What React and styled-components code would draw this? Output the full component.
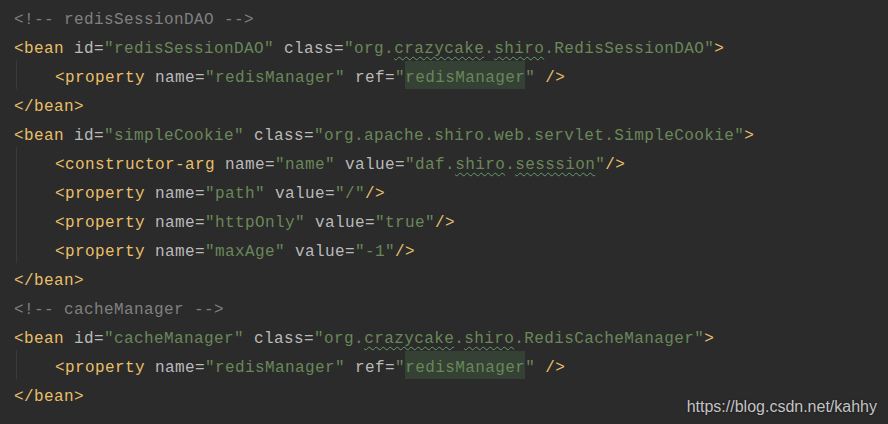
import styled, { createGlobalStyle } from "styled-components";

const GlobalStyle = createGlobalStyle`
  html, body {
    margin: 0;
    padding: 0;
    background: #2b2b2b;
  }
`;

const colors = {
  tag: "#e8bf6a",
  attr: "#bababa",
  val: "#6a8759",
  cmt: "#808080",
  plain: "#a9b7c6",
};

// [kind, text] ; kinds: tag, attr, val, cmt, plain, typo, hl
const lines = [
  { tokens: [["cmt", "<!-- redisSessionDAO -->"]] },
  {
    tokens: [
      ["tag", "<bean"], ["plain", " "], ["attr", "id="], ["val", '"redisSessionDAO"'],
      ["plain", " "], ["attr", "class="], ["val", '"org.'], ["typo", "crazycake"],
      ["val", "."], ["typo", "shiro"], ["val", '.RedisSessionDAO"'], ["tag", ">"],
    ],
  },
  {
    indent: true,
    tokens: [
      ["tag", "<property"], ["plain", " "], ["attr", "name="], ["val", '"redisManager"'],
      ["plain", " "], ["attr", "ref="], ["val", '"'], ["hl", "redisManager"], ["val", '"'],
      ["plain", " "], ["tag", "/>"],
    ],
  },
  { tokens: [["tag", "</bean>"]] },
  {
    tokens: [
      ["tag", "<bean"], ["plain", " "], ["attr", "id="], ["val", '"simpleCookie"'],
      ["plain", " "], ["attr", "class="], ["val", '"org.apache.shiro.web.servlet.SimpleCookie"'],
      ["tag", ">"],
    ],
  },
  {
    indent: true,
    tokens: [
      ["tag", "<constructor-arg"], ["plain", " "], ["attr", "name="], ["val", '"name"'],
      ["plain", " "], ["attr", "value="], ["val", '"daf.'], ["typo", "shiro"], ["val", "."],
      ["typo", "sesssion"], ["val", '"'], ["tag", "/>"],
    ],
  },
  {
    indent: true,
    tokens: [
      ["tag", "<property"], ["plain", " "], ["attr", "name="], ["val", '"path"'],
      ["plain", " "], ["attr", "value="], ["val", '"/"'], ["tag", "/>"],
    ],
  },
  {
    indent: true,
    tokens: [
      ["tag", "<property"], ["plain", " "], ["attr", "name="], ["val", '"httpOnly"'],
      ["plain", " "], ["attr", "value="], ["val", '"true"'], ["tag", "/>"],
    ],
  },
  {
    indent: true,
    tokens: [
      ["tag", "<property"], ["plain", " "], ["attr", "name="], ["val", '"maxAge"'],
      ["plain", " "], ["attr", "value="], ["val", '"-1"'], ["tag", "/>"],
    ],
  },
  { tokens: [["tag", "</bean>"]] },
  { tokens: [["cmt", "<!-- cacheManager -->"]] },
  {
    tokens: [
      ["tag", "<bean"], ["plain", " "], ["attr", "id="], ["val", '"cacheManager"'],
      ["plain", " "], ["attr", "class="], ["val", '"org.'], ["typo", "crazycake"],
      ["val", "."], ["typo", "shiro"], ["val", '.RedisCacheManager"'], ["tag", ">"],
    ],
  },
  {
    indent: true,
    tokens: [
      ["tag", "<property"], ["plain", " "], ["attr", "name="], ["val", '"redisManager"'],
      ["plain", " "], ["attr", "ref="], ["val", '"'], ["hl", "redisManager"], ["val", '"'],
      ["plain", " "], ["tag", "/>"],
    ],
  },
  { tokens: [["tag", "</bean>"]] },
];

const App = () => {
  return (
    <>
      <GlobalStyle />
      <Editor>
        {lines.map((line, i) => (
          <Line key={i}>
            {line.indent && <Indent />}
            {line.tokens.map(([kind, text], j) => (
              <Token key={j} $kind={kind}>
                {text}
              </Token>
            ))}
          </Line>
        ))}
        <Watermark>https://blog.csdn.net/kahhy</Watermark>
      </Editor>
    </>
  );
};

const Editor = styled.div`
  position: relative;
  width: 888px;
  height: 424px;
  box-sizing: border-box;
  padding: 2px 0 0 14px;
  background: #2b2b2b;
  overflow: hidden;
`;

const Line = styled.div`
  display: flex;
  align-items: flex-start;
  height: 29px;
  font-family: "Liberation Mono", "DejaVu Sans Mono", monospace;
  font-size: 16px;
  letter-spacing: 0.4px;
  white-space: pre;
`;

const Indent = styled.span`
  align-self: stretch;
  width: 38px;
  margin: 0 0 0 2px;
  border-left: 1px solid #3a3a3a;
  flex-shrink: 0;
`;

const Token = styled.span`
  display: block;
  line-height: 22px;
  padding-top: ${({ $kind }) => ($kind === "hl" ? "6px" : "7px")};
  margin-top: ${({ $kind }) => ($kind === "hl" ? "1px" : "0")};
  color: ${({ $kind }) =>
    $kind === "typo" || $kind === "hl" ? colors.val : colors[$kind]};
  background: ${({ $kind }) => ($kind === "hl" ? "#344134" : "transparent")};
  text-decoration: ${({ $kind }) =>
    $kind === "typo" ? "underline wavy #659c6b" : "none"};
  text-decoration-thickness: 1px;
  text-underline-offset: 3px;
`;

const Watermark = styled.div`
  position: absolute;
  right: 11px;
  bottom: 8px;
  font-family: "Liberation Sans", Arial, sans-serif;
  font-size: 16px;
  color: #c4c4c4;
  text-shadow: 0 0 2px rgba(0, 0, 0, 0.6);
`;

export default App;
